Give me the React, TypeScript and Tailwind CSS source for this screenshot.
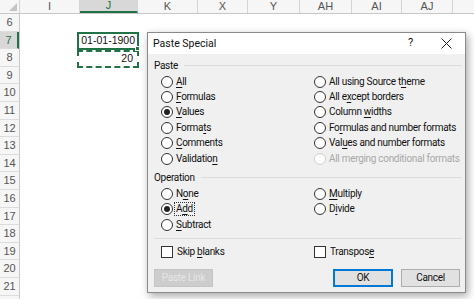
import React from "react";

const cols = [
  { l: "I", w: 60 },
  { l: "J", w: 58, sel: true },
  { l: "K", w: 60 },
  { l: "X", w: 50 },
  { l: "Y", w: 52 },
  { l: "AH", w: 52 },
  { l: "AI", w: 50 },
  { l: "AJ", w: 51 },
  { l: "", w: 40 },
];
const rows = [6, 7, 8, 9, 10, 11, 12, 13, 14, 15, 16, 17, 18, 19, 20, 21, 0];

function Acc({ text, i }: { text: string; i?: number }) {
  if (i === undefined) return <>{text}</>;
  return (
    <>
      {text.slice(0, i)}
      <span className="underline underline-offset-[2px]">{text[i]}</span>
      {text.slice(i + 1)}
    </>
  );
}

function Radio({
  text,
  i,
  checked,
  disabled,
  focus,
}: {
  text: string;
  i?: number;
  checked?: boolean;
  disabled?: boolean;
  focus?: boolean;
}) {
  return (
    <div className="flex h-[15.4px] items-center whitespace-nowrap">
      <div
        className={`flex h-[12px] w-[12px] shrink-0 items-center justify-center rounded-full border bg-white ${
          disabled ? "border-[#d0d0d0]" : "border-[#333]"
        }`}
      >
        {checked && <div className="h-[6px] w-[6px] rounded-full bg-[#222]" />}
      </div>
      <span
        className={`ml-[2px] px-[1px] leading-[12px] ${
          disabled ? "text-[#a8a8a8]" : "text-[#111]"
        } ${focus ? "outline outline-1 outline-dotted outline-[#333]" : ""}`}
      >
        <Acc text={text} i={i} />
      </span>
    </div>
  );
}

function Check({ text, i }: { text: string; i?: number }) {
  return (
    <div className="flex h-[16px] items-center whitespace-nowrap">
      <div className="h-[12px] w-[12px] shrink-0 border border-[#333] bg-white" />
      <span className="ml-[4px] text-[#111]">
        <Acc text={text} i={i} />
      </span>
    </div>
  );
}

function GroupLabel({ text }: { text: string }) {
  return (
    <div className="flex h-[16px] items-center pr-[3px]">
      <span className="text-[#111]">{text}</span>
      <div className="ml-[6px] h-px flex-1 bg-[#dcdcdc]" />
    </div>
  );
}

export default function App() {
  return (
    <div
      className="relative h-[299px] w-[474px] overflow-hidden bg-white"
      style={{ fontFamily: "'Liberation Sans', Arial, sans-serif" }}
    >
      {/* header row */}
      <div className="flex h-[14px] border-b border-[#c8c8c8] bg-[#f6f6f6] text-[11px] leading-[13px] text-[#555]">
        <div className="relative w-[20px] shrink-0 border-r border-[#d4d4d4]">
          <div className="absolute bottom-[2px] right-[2px] h-0 w-0 border-b-[8px] border-l-[8px] border-b-[#c4c4c4] border-l-transparent" />
        </div>
        {cols.map((c, k) => (
          <div
            key={k}
            className={`flex shrink-0 items-center justify-center border-r border-[#d4d4d4] ${
              c.sel ? "border-b-2 border-b-[#217346] bg-[#d8d8d8] text-[#217346]" : ""
            }`}
            style={{ width: c.w }}
          >
            {c.l}
          </div>
        ))}
      </div>
      {/* rows */}
      <div className="flex">
        <div className="flex w-[20px] shrink-0 flex-col border-r border-[#c8c8c8] bg-[#f6f6f6]">
          {rows.map((r, k) => (
            <div
              key={k}
              className={`flex h-[17.6px] shrink-0 items-center justify-center border-b border-[#dcdcdc] text-[11px] ${
                r === 7 ? "border-r-2 border-r-[#217346] bg-[#d8d8d8] text-[#217346]" : "text-[#555]"
              }`}
            >
              {r > 0 ? r : ""}
            </div>
          ))}
        </div>
        <div className="flex flex-col">
          <div className="h-[17.6px]" />
          <div className="relative ml-[57px] flex h-[18px] w-[62px] items-center justify-end whitespace-nowrap border-2 border-[#217346] pr-[2px] text-[10.5px] text-[#111]">
            01-01-1900
            <div className="absolute -bottom-[3px] -right-[3px] h-[5px] w-[5px] border border-white bg-[#217346]" />
          </div>
          <div className="ml-[57px] flex h-[18px] w-[62px] items-center justify-end whitespace-nowrap border-2 border-dashed border-[#217346] pr-[4px] text-[10.5px] text-[#111]">
            20
          </div>
        </div>
      </div>

      {/* dialog */}
      <div
        className="absolute left-[147px] top-[32px] flex h-[261px] w-[319px] flex-col border border-[#8a8a8a] bg-[#f0f0f0] text-[10px] tracking-[-0.3px] shadow-[2px_3px_8px_rgba(0,0,0,0.35)]"
        style={{ fontFamily: "Roboto, 'Liberation Sans', sans-serif" }}
      >
        <div className="flex h-[21px] shrink-0 items-center bg-white pl-[5px] pr-[12px] text-[#111]">
          <span className="text-[10.5px] tracking-normal">Paste Special</span>
          <span className="ml-auto mr-[28px] text-[11px]">?</span>
          <svg width="11" height="11" viewBox="0 0 11 11" className="mr-[1px]">
            <path d="M0.5 0.5 L10.5 10.5 M10.5 0.5 L0.5 10.5" stroke="#222" strokeWidth="1" />
          </svg>
        </div>
        <div className="flex flex-col pl-[6px] pt-[3px]">
          <GroupLabel text="Paste" />
          <div className="mt-[1px] flex">
            <div className="flex w-[160px] shrink-0 flex-col pl-[7px]">
              <Radio text="All" i={0} />
              <Radio text="Formulas" i={0} />
              <Radio text="Values" i={0} checked />
              <Radio text="Formats" i={5} />
              <Radio text="Comments" i={0} />
              <Radio text="Validation" i={9} />
            </div>
            <div className="flex flex-col">
              <Radio text="All using Source theme" i={18} />
              <Radio text="All except borders" i={5} />
              <Radio text="Column widths" i={7} />
              <Radio text="Formulas and number formats" i={2} />
              <Radio text="Values and number formats" i={3} />
              <Radio text="All merging conditional formats" disabled />
            </div>
          </div>
          <div className="mt-[3px]">
            <GroupLabel text="Operation" />
          </div>
          <div className="mt-[1px] flex">
            <div className="flex w-[160px] shrink-0 flex-col pl-[7px]">
              <Radio text="None" i={1} />
              <Radio text="Add" i={1} checked focus />
              <Radio text="Subtract" i={0} />
            </div>
            <div className="flex flex-col">
              <Radio text="Multiply" i={0} />
              <Radio text="Divide" i={1} />
            </div>
          </div>
          <div className="mr-[3px] mt-[5px] h-px bg-[#dcdcdc]" />
          <div className="mt-[5px] flex">
            <div className="w-[160px] shrink-0 pl-[7px]">
              <Check text="Skip blanks" i={5} />
            </div>
            <Check text="Transpose" i={8} />
          </div>
          <div className="mt-[9px] flex">
            <div className="flex h-[18px] w-[59px] items-center justify-center whitespace-nowrap border border-[#c4c4c4] bg-[#cdcdcd] text-[#e6e6e6]">
              Paste Link
            </div>
            <div className="ml-auto flex h-[18px] w-[60px] items-center justify-center border-2 border-[#0078d7] bg-[#e1e1e1] text-[#111]">
              OK
            </div>
            <div className="ml-[8px] mr-[5px] flex h-[18px] w-[59px] items-center justify-center border border-[#adadad] bg-[#e1e1e1] text-[#111]">
              Cancel
            </div>
          </div>
        </div>
      </div>
    </div>
  );
}
